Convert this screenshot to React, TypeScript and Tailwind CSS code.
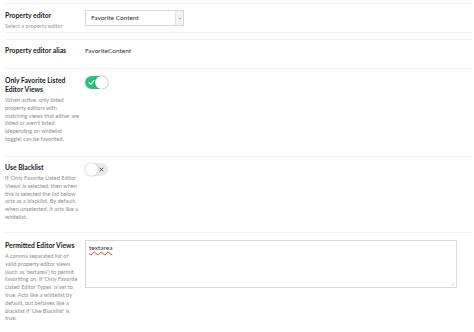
import React from "react";

function Toggle({ on }: { on: boolean }) {
    if (on) {
        return (
            <div className="relative w-[23px] h-[13px] rounded-full bg-[#2bc37c]">
                <svg className="absolute left-[3px] top-[3px]" width="7" height="7" viewBox="0 0 10 10">
                    <path d="M1.5 5.2 L4 7.6 L8.6 2.4" fill="none" stroke="#fff" strokeWidth="1.8" strokeLinecap="round" strokeLinejoin="round" />
                </svg>
                <div className="absolute right-0 top-0 w-[13px] h-[13px] rounded-full bg-white shadow-[0_0_2px_rgba(0,0,0,0.35)]" />
            </div>
        );
    }
    return (
        <div className="relative w-[23px] h-[13px] rounded-full bg-[#e9e9eb]">
            <svg className="absolute right-[4px] top-[4px]" width="5" height="5" viewBox="0 0 10 10">
                <path d="M2 2 L8 8 M8 2 L2 8" fill="none" stroke="#555" strokeWidth="2" strokeLinecap="round" />
            </svg>
            <div className="absolute left-0 top-0 w-[13px] h-[13px] rounded-full bg-white shadow-[0_0_2px_rgba(0,0,0,0.3)]" />
        </div>
    );
}

function Label({ title, desc }: { title: string[]; desc?: string[] }) {
    return (
        <div className="w-[80px] shrink-0 whitespace-nowrap">
            {title.map((t) => (
                <div key={t} className="text-[6.8px] leading-[9px] font-bold text-[#1b1b1d]">{t}</div>
            ))}
            {desc && (
                <div className="mt-[2px] text-[5.6px] leading-[7.8px] text-[#8d8d91]">
                    {desc.map((d) => (
                        <div key={d}>{d}</div>
                    ))}
                </div>
            )}
        </div>
    );
}

export default function App() {
    return (
        <div className="w-[474px] h-[332px] overflow-hidden bg-white pl-[5px] pr-[2px] pt-[3px] [font-family:Lato,'Liberation_Sans',sans-serif]">
            <div className="border-t border-[#f1f1f1] h-[30px] border-b flex pt-[7px]">
                <div className="w-[80px] shrink-0 whitespace-nowrap">
                    <div className="text-[6.8px] leading-[9px] font-bold text-[#1b1b1d]">Property editor</div>
                    <div className="mt-[2px] text-[5.6px] leading-[7px] text-[#9a9a9e]">Select a property editor</div>
                </div>
                <div className="w-[99px] h-[16px] -mt-[1px] border border-[#d8d8d8] flex items-center justify-between pl-[5px]">
                    <span className="text-[6.5px] text-[#333]">Favorite Content</span>
                    <div className="w-[8px] h-[14px] border-l border-[#e2e2e2] bg-[#f4f4f4] flex items-center justify-center">
                        <svg width="4" height="3" viewBox="0 0 8 6">
                            <path d="M1 1.5 L4 4.5 L7 1.5" fill="none" stroke="#777" strokeWidth="1.3" />
                        </svg>
                    </div>
                </div>
            </div>
            <div className="h-[6px]" />
            <div className="border-t border-[#f1f1f1] h-[29px] flex items-start pt-[6px]">
                <Label title={["Property editor alias"]} />
                <div className="text-[6.5px] leading-[9px] text-[#333]">FavoriteContent</div>
            </div>
            <div className="border-t border-[#f1f1f1] h-[88px] flex pt-[7px]">
                <Label
                    title={["Only Favorite Listed", "Editor Views"]}
                    desc={[
                        "When active, only listed",
                        "property editors with",
                        "matching views that either are",
                        "listed or aren't listed",
                        "(depending on whitelist",
                        "toggle) can be favorited.",
                    ]}
                />
                <Toggle on />
            </div>
            <div className="border-t border-[#f1f1f1] h-[76px] flex pt-[6px]">
                <Label
                    title={["Use Blacklist"]}
                    desc={[
                        "If 'Only Favorite Listed Editor",
                        "Views' is selected, then when",
                        "this is selected the list below",
                        "acts as a blacklist. By default,",
                        "when unselected, it acts like a",
                        "whitelist.",
                    ]}
                />
                <Toggle on={false} />
            </div>
            <div className="border-t border-[#f1f1f1] flex pt-[8px]">
                <Label
                    title={["Permitted Editor Views"]}
                    desc={[
                        "A comma separated list of",
                        "valid property editor views",
                        "(such as 'textarea') to permit",
                        "favoriting on, if 'Only Favorite",
                        "Listed Editor Types' is set to",
                        "true. Acts like a whitelist by",
                        "default, but behaves like a",
                        "blacklist if 'Use Blacklist' is",
                        "true.",
                    ]}
                />
                <div className="relative w-[372px] h-[48px] -mt-[1px] border border-[#d8d8d8] px-[3px] py-[2px] text-[6.5px] leading-[9px] text-[#333]">
                    <span className="underline decoration-wavy decoration-[#e0443a] decoration-[0.6px] underline-offset-[1px]">textarea</span>
                    <svg className="absolute right-[1px] bottom-[1px]" width="4" height="4" viewBox="0 0 8 8">
                        <path d="M7 1 L1 7 M7 4 L4 7" stroke="#aaa" strokeWidth="1" />
                    </svg>
                </div>
            </div>
        </div>
    );
}
